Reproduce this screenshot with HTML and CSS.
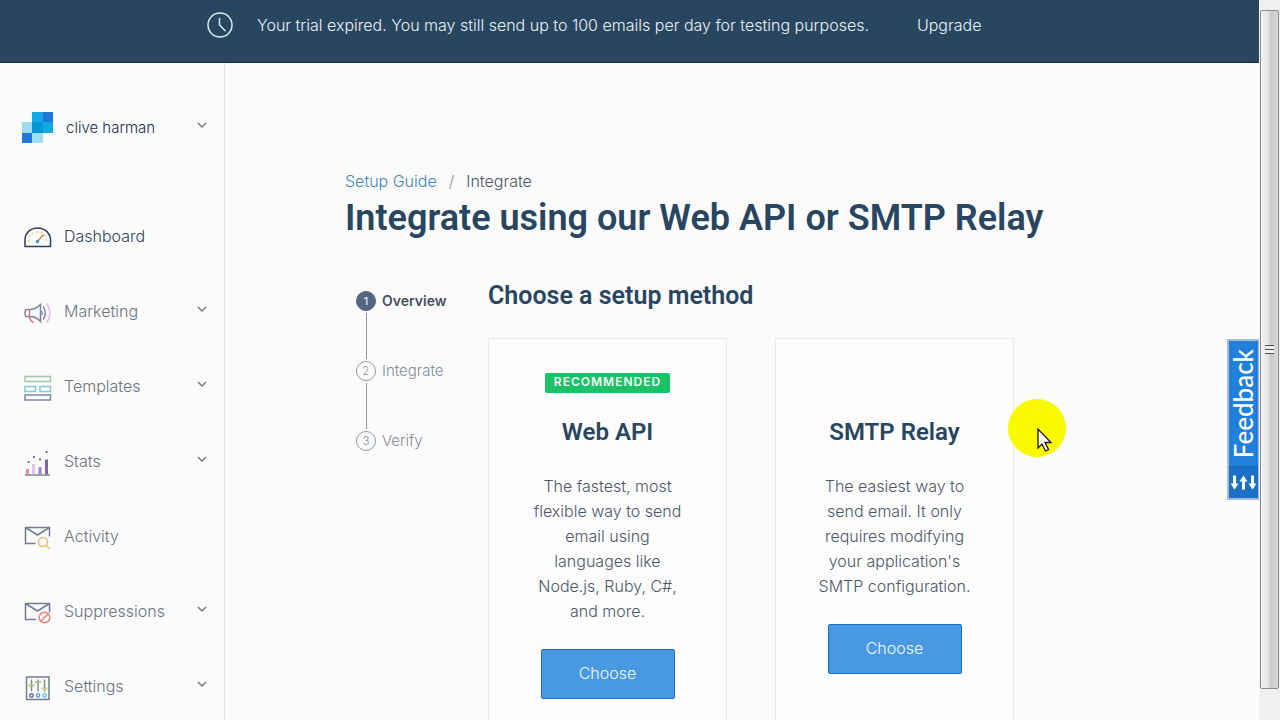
FILE: index.html
```html
<!DOCTYPE html>
<html lang="en">
<head>
  <meta charset="utf-8">
  <title>Integrate using our Web API or SMTP Relay</title>
  <link rel="stylesheet" href="styles.css">
</head>
<body>

<div class="page">
  <header class="banner">
    <svg class="clock" width="26" height="26" viewBox="0 0 26 26">
      <circle cx="13" cy="13" r="12"/>
      <path d="M12.5 6v7l6 6"/>
    </svg>
    <span class="banner-text">Your trial expired. You may still send up to 100 emails per day for testing purposes.</span>
    <a href="#">Upgrade</a>
  </header>

  <div class="columns">
    <nav class="sidebar">
      <button type="button" class="account">
        <svg width="31" height="31" viewBox="0 0 30 30" shape-rendering="crispEdges">
          <path fill="#9fdcf2" d="M0 10h10v10H0zM10 20h10v10H10z"/>
          <path fill="#1f77dc" d="M0 20h10v10H0zM20 0h10v10H20z"/>
          <path fill="#12a8e4" d="M10 0h10v10H10zM20 10h10v10H20z"/>
          <path fill="#0596d6" d="M10 10h10v10H10z"/>
        </svg>
        <span>clive harman</span>
        <svg class="chevron" width="10" height="6" viewBox="0 0 10 6"><path d="M1 1l4 4 4-4"/></svg>
      </button>

      <ul class="menu">
        <li><a href="#" class="active">
          <svg class="icon" width="28" height="28" viewBox="0 0 28 28">
            <path stroke="#2f3a5c" stroke-width="1.5" d="M1 23.500V17C1 10 6.500 5 13.500 5S26.500 10 26.500 17v6.500z"/>
            <path stroke="#f2cf70" stroke-dasharray="2 2.500" d="M4.500 19c0-6 4-10 9-10s9 4 9 10"/>
            <path stroke="#e5694f" stroke-width="1.300" d="M14 18l5.500-6.500"/>
            <circle cx="13.500" cy="18.500" r="1" stroke="#3b93d0"/>
          </svg>
          <span>Dashboard</span></a></li>
        <li><a href="#">
          <svg class="icon" width="28" height="28" viewBox="0 0 28 28">
            <path stroke="#7b8494" d="M6 11.500c4 0 7-1.500 10.500-5v17c-3.500-4-6.500-5-10.500-5H2.500c-1 0-1.500-2-1.500-3.500s.5-3.500 1.500-3.500z"/>
            <path stroke="#c77a88" d="M5.500 11.500v7c0 3 1.500 4.500 4 6"/>
            <path stroke="#6f9fca" d="M17.500 13c1 1 1 3 0 4"/>
            <path stroke="#9a77b8" d="M19 8.500c3 3.500 3 9.500 0 13"/>
            <path stroke="#dcc1e8" d="M22.500 5.500c4.500 5 4.500 14 0 19"/>
          </svg>
          <span>Marketing</span>
          <svg class="chevron" width="10" height="6" viewBox="0 0 10 6"><path d="M1 1l4 4 4-4"/></svg></a></li>
        <li><a href="#">
          <svg class="icon" width="28" height="28" viewBox="0 0 28 28">
            <path stroke="#a4c3ae" d="M1 3.500h25.500V8.500H1z"/>
            <path stroke="#7fcbd6" d="M1 13.500h10.500V18.500H1zM16 13.500h10.500V18.500H16z"/>
            <path stroke="#7d8a9e" d="M1 22h25.500v5H1z"/>
          </svg>
          <span>Templates</span>
          <svg class="chevron" width="10" height="6" viewBox="0 0 10 6"><path d="M1 1l4 4 4-4"/></svg></a></li>
        <li><a href="#">
          <svg class="icon" width="28" height="28" viewBox="0 0 28 28">
            <path stroke="#7b8494" d="M1 27h25"/>
            <g stroke-width="3"><path stroke="#ec8f9a" d="M3.500 21v5.500"/><path stroke="#e3c3ef" d="M9.500 16v10.500"/><path stroke="#9b86cf" d="M16 19v7.500"/><path stroke="#8a5fa8" d="M22.500 11.500v15"/></g>
            <path stroke="#6d7584" stroke-width="2" d="M3.500 14h2M9 9h2M15 11.500h2M21.500 4h2"/>
          </svg>
          <span>Stats</span>
          <svg class="chevron" width="10" height="6" viewBox="0 0 10 6"><path d="M1 1l4 4 4-4"/></svg></a></li>
        <li><a href="#">
          <svg class="icon" width="28" height="28" viewBox="0 0 28 28">
            <path stroke="#747c8b" d="M11.500 20.500h-10V4.500h24v9M1.500 4.500L13.500 12l12-7.500"/>
            <circle cx="19" cy="19" r="4.500" stroke="#f0bd68"/><path stroke="#f0bd68" d="M22 22.500l4 3.500"/>
          </svg>
          <span>Activity</span></a></li>
        <li><a href="#">
          <svg class="icon" width="28" height="28" viewBox="0 0 28 28">
            <path stroke="#747c8b" d="M12 21.500H1.500V5.500h24v9M1.500 5.500L13.500 13l12-7.500"/>
            <g stroke="#e5826f"><circle cx="20.500" cy="19.500" r="5.300"/><path d="M16.800 23.200l7.400-7.400"/></g>
          </svg>
          <span>Suppressions</span>
          <svg class="chevron" width="10" height="6" viewBox="0 0 10 6"><path d="M1 1l4 4 4-4"/></svg></a></li>
        <li><a href="#">
          <svg class="icon" width="28" height="28" viewBox="0 0 28 28">
            <path stroke="#747c8b" d="M2.500 4h22.500v22.500H2.500z"/>
            <path stroke="#7f9488" d="M7.500 6.500v12M14 6.500v12M20.500 6.500v12"/>
            <path stroke="#a8c98a" stroke-width="2" d="M4.500 12.500h6M11 9h6"/><path stroke="#c6cf86" stroke-width="2" d="M17.500 15.500h6"/>
            <circle cx="7.500" cy="22.500" r="1.700" stroke="#716a99"/><circle cx="14" cy="22.500" r="1.700" stroke="#5eabd4"/><circle cx="20.500" cy="22.500" r="1.700" stroke="#6bc6de"/>
          </svg>
          <span>Settings</span>
          <svg class="chevron" width="10" height="6" viewBox="0 0 10 6"><path d="M1 1l4 4 4-4"/></svg></a></li>
      </ul>
    </nav>

    <main class="content">
      <div class="breadcrumb"><a href="#">Setup Guide</a><span class="slash">/</span><span>Integrate</span></div>
      <h1>Integrate using our Web API or SMTP Relay</h1>

      <div class="setup">
        <ol class="steps">
          <li class="current"><span class="num">1</span>Overview</li>
          <li><span class="num">2</span>Integrate</li>
          <li><span class="num">3</span>Verify</li>
        </ol>

        <section class="methods">
          <h2>Choose a setup method</h2>
          <div class="cards">
            <article class="card">
              <div class="tag"><span class="badge">RECOMMENDED</span></div>
              <h3>Web API</h3>
              <p>The fastest, most flexible way to send email using languages like Node.js, Ruby, C#, and more.</p>
              <button type="button" class="choose">Choose</button>
            </article>
            <article class="card">
              <div class="tag"></div>
              <h3>SMTP Relay</h3>
              <p>The easiest way to send email. It only requires modifying your application's SMTP configuration.</p>
              <button type="button" class="choose">Choose</button>
            </article>
          </div>
        </section>
      </div>
    </main>
  </div>

  <button type="button" class="feedback">
    <span class="feedback-label">Feedback</span>
    <svg width="27" height="18" viewBox="0 0 27 18">
      <path d="M3 2h3v8h2.500l-4 6-4-6H3zM12 16h3V8h2.500l-4-6-4 6H12zM21 2h3v8h2.500l-4 6-4-6H21z"/>
    </svg>
  </button>
</div>

<div class="scrollbar">
  <div class="thumb"><span class="grip"></span></div>
</div>

<!-- pointer with highlight -->
<div class="pointer">
  <svg width="58" height="58" viewBox="0 0 58 58">
    <circle cx="29" cy="29" r="29" fill="#f9f900"/>
    <path fill="#fff" stroke="#1a1208" stroke-width="1.300" d="M30 30v19l4-4 3.500 7 3-1.500-3.500-7h6z"/>
  </svg>
</div>

</body>
</html>
```
FILE: styles.css
```css
* {
  box-sizing: border-box;
}
body {
  margin: 0;
  display: flex;
  height: 100vh;
  overflow: hidden;
  background: #fbfbfc;
  color: #4d5768;
  font-family: Inter, "Liberation Sans", sans-serif;
  font-size: 16px;
  font-weight: 300;
  line-height: 25px;
}
h1, h2, h3, p, ul, ol {
  margin: 0;
  padding: 0;
}
ul, ol {
  list-style: none;
}
a {
  color: inherit;
  text-decoration: none;
}
button {
  font: inherit;
  cursor: pointer;
}
svg {
  fill: none;
  flex: none;
}

.page {
  flex: 1;
  min-width: 0;
  display: flex;
  flex-direction: column;
  position: relative;
}

/* trial banner */
.banner {
  flex: none;
  display: flex;
  align-items: center;
  padding: 12px 24px 24px 207px;
  background: #294661;
  border-bottom: 1px solid #172c3f;
  color: #eaf1f6;
}
.clock {
  stroke: #dbe9f1;
  stroke-width: 1.5;
}
.banner-text {
  margin: 0 48px 0 24px;
}

.columns {
  flex: 1;
  min-height: 0;
  display: flex;
}

/* left menu */
.sidebar {
  flex: none;
  width: 225px;
  padding-top: 46px;
  border-right: 1px solid #e3e4e6;
}
.account, .menu a {
  display: flex;
  align-items: center;
  width: 100%;
  padding: 0 17px 0 24px;
}
.account {
  height: 36px;
  margin-bottom: 54px;
  padding-left: 22px;
  gap: 13px;
  border: 0;
  background: none;
  color: #1d2f45;
  font-size: 15px;
}
.menu a {
  height: 75px;
  gap: 12px;
  color: #6d747f;
}
.menu .active {
  color: #34435a;
}
.icon {
  stroke-width: 1.5;
}
.chevron {
  margin: 0 0 5px auto;
  stroke: #6d7580;
  stroke-width: 1.4;
}

/* main column */
.content {
  flex: 1;
  min-width: 0;
  padding: 106px 48px 0 120px;
}
.breadcrumb a {
  color: #3f86bb;
}
.slash {
  margin: 0 12px;
  color: #8d949c;
}
h1, h2, h3 {
  color: #294661;
  font-family: Roboto, "Liberation Sans", sans-serif;
  font-weight: 600;
}
h1 {
  font-size: 36px;
  line-height: 48px;
}
.setup {
  display: flex;
  margin-top: 38px;
}
.steps {
  flex: none;
  width: 143px;
  padding: 11px 0 0 11px;
  font-size: 15px;
  line-height: 20px;
  color: #868c95;
}
.steps li {
  display: grid;
  grid-template-columns: 20px auto;
  column-gap: 6px;
}
.steps li:not(:last-child)::after {
  content: "";
  width: 1px;
  height: 46px;
  margin: 2px auto;
  background: #9499a1;
}
.num {
  border: 1px solid #9499a1;
  border-radius: 50%;
  font-size: 11px;
  line-height: 18px;
  text-align: center;
}
.steps .current {
  color: #46505f;
  font-size: 14px;
  font-weight: 600;
}
.steps .current::after {
  background: #3a4452;
}
.current .num {
  border-color: #546683;
  background: #546683;
  color: #fff;
  font-weight: 400;
}

h2 {
  font-size: 25px;
  line-height: 32px;
}
.cards {
  display: flex;
  gap: 48px;
  margin-top: 26px;
}
.card {
  width: 239px;
  min-height: 420px;
  padding: 34px 41px;
  background: #fdfdfe;
  border: 1px solid #e7e8ea;
  text-align: center;
}
.tag {
  display: flex;
  justify-content: center;
  height: 20px;
}
.badge {
  padding: 0 9px;
  border-radius: 2px;
  background: #1cc268;
  color: #f2fff7;
  font-size: 12px;
  font-weight: 600;
  letter-spacing: 1px;
  line-height: 18px;
}
h3 {
  margin: 24px 0 27px;
  font-size: 24px;
  line-height: 30px;
}
.choose {
  width: 134px;
  height: 50px;
  margin-top: 25px;
  padding: 0 0 2px;
  border: 1px solid #1b6fbe;
  border-radius: 2px;
  background: #4898e4;
  color: #f4f9fe;
}

/* vertical tab on the right edge */
.feedback {
  position: absolute;
  top: 339px;
  right: 0;
  display: flex;
  flex-direction: column;
  align-items: center;
  width: 32px;
  padding: 0;
  border: 2px solid #a9bccf;
  border-right-width: 1px;
  background: #2180dc;
  color: #fff;
}
.feedback-label {
  width: 100%;
  padding: 8px 0;
  font-family: Lato, sans-serif;
  font-size: 26px;
  font-weight: 500;
  line-height: 29px;
  writing-mode: vertical-rl;
  transform: rotate(180deg);
}
.feedback svg {
  width: 100%;
  height: 32px;
  padding: 5px 1px;
  border-top: 1px solid #1767b8;
  background: #1b71c8;
  fill: #fff;
}

.scrollbar {
  flex: none;
  width: 21px;
  padding: 10px 1px 31px;
  background: #f0f0f1;
}
.thumb {
  display: flex;
  align-items: center;
  justify-content: center;
  height: 100%;
  border: 1px solid #8b8b8e;
  border-radius: 2px;
  background: linear-gradient(to right, #f4f4f5, #e6e6e8 40%, #c9c9cd 60%, #d9d9dc);
}
.grip {
  width: 9px;
  height: 9px;
  background: repeating-linear-gradient(#4c4c50 0 1px, #f2f2f2 1px 4px);
}

.pointer {
  position: absolute;
  top: 399px;
  left: 1008px;
  pointer-events: none;
}
```
